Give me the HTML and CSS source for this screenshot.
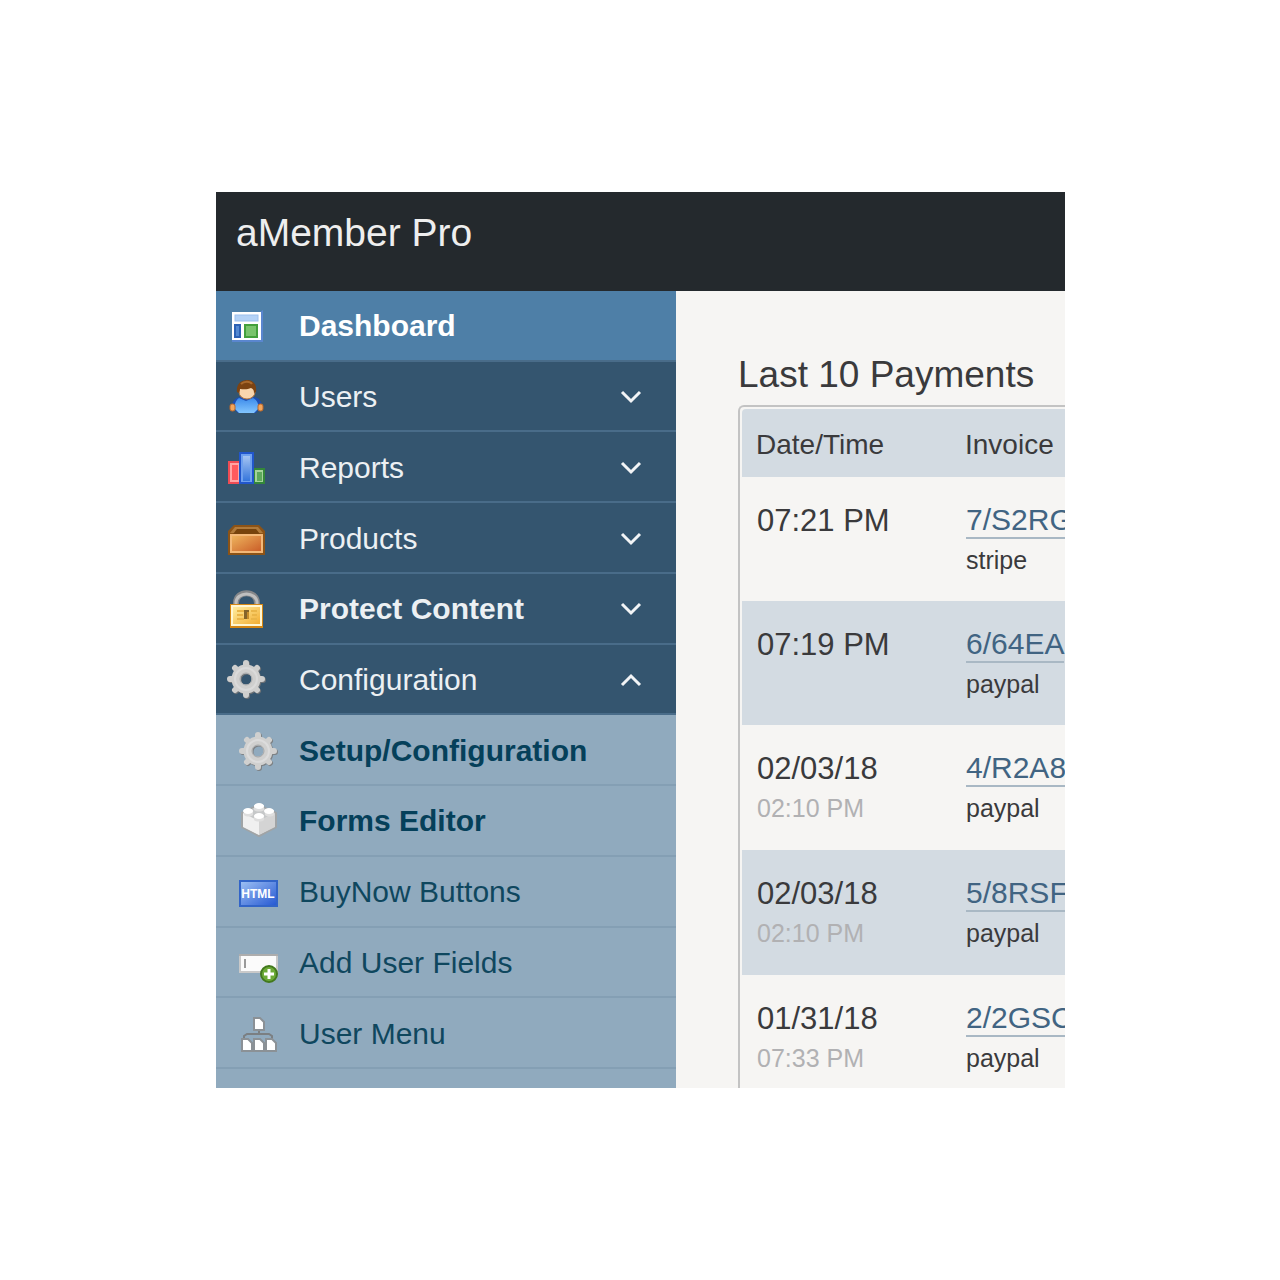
FILE: index.html
```html
<!DOCTYPE html>
<html lang="en">
<head>
  <meta charset="UTF-8" />
  <meta name="viewport" content="width=device-width, initial-scale=1.0"/>
  <title>aMember Pro</title>
  <link rel="stylesheet" href="styles.css">
</head>
<body>

  <div class="app">
    <header class="topbar">aMember Pro</header>

    <div class="content">
      <!-- Sidebar -->
      <nav class="sidebar">
        <ul class="menu">
          <li class="active">
            <a href="#">
              <svg class="icon" viewBox="0 0 40 40">
                <path d="M6 6h28l3-2v32H6z" fill="#5a86cf"/>
                <rect x="6" y="6" width="29" height="28" fill="#fff"/>
                <rect x="9" y="9" width="23" height="6" fill="#b4d2f6" stroke="#9cc0ee"/>
                <rect x="9" y="19" width="5" height="12" fill="#5289d2" stroke="#2c62b4" stroke-width="2"/>
                <rect x="19" y="19" width="12" height="12" fill="#79c46c" stroke="#43a03c" stroke-width="2"/>
              </svg>
              <span>Dashboard</span>
            </a>
          </li>
          <li>
            <a href="#">
              <svg class="icon" viewBox="0 0 40 40">
                <defs>
                  <linearGradient id="shirt" x1="0" y1="0" x2="0" y2="1">
                    <stop offset="0" stop-color="#3d8bea"/>
                    <stop offset="1" stop-color="#82c6ff"/>
                  </linearGradient>
                </defs>
                <path d="M6 29c0-5 4-9 9-9h12c5 0 9 4 9 9l-4 4-2 3H12l-3-3z" fill="#1c4fb4"/>
                <path d="M13 21l7 3 7-3c4 2 6 6 5 11l-4 4H13l-4-4c-1-5 1-9 4-11z" fill="url(#shirt)"/>
                <rect x="4" y="27" width="5" height="7" rx="2" fill="#f2a65c" stroke="#b8662a"/>
                <rect x="32" y="27" width="5" height="7" rx="2" fill="#f2a65c" stroke="#b8662a"/>
                <ellipse cx="21" cy="15" rx="8" ry="7" fill="#f8d6ae" stroke="#b57840"/>
                <path d="M11 15C10 7 15 3 21 3s10 4 9 12l-2 1c0-3-1-4-3-5-4 2-9 1-11 1l-1 4z" fill="#7c4312"/>
                <path d="M15 7c3-3 9-3 11 0" stroke="#a8692c" stroke-width="2" fill="none"/>
              </svg>
              <span>Users</span>
              <svg class="chevron" viewBox="0 0 22 14"><path d="M2 2l9 9 9-9"/></svg>
            </a>
          </li>
          <li>
            <a href="#">
              <svg class="icon" viewBox="0 0 40 40">
                <defs>
                  <linearGradient id="bar" x1="0" y1="0" x2="0" y2="1">
                    <stop offset="0" stop-color="#a5c4f2"/>
                    <stop offset="1" stop-color="#3576dc"/>
                  </linearGradient>
                </defs>
                <rect x="3" y="14" width="11" height="21" fill="#ffa4a4" stroke="#ee4c54" stroke-width="2"/>
                <rect x="6" y="17" width="6" height="15" fill="#ff5a5e"/>
                <rect x="28" y="21" width="10" height="14" fill="#a5d49b" stroke="#33873a" stroke-width="2"/>
                <rect x="31" y="24" width="5" height="9" fill="#5fa95c"/>
                <rect x="14" y="5" width="13" height="30" fill="#6ea0ee" stroke="#2156cc" stroke-width="2"/>
                <rect x="17" y="8" width="7" height="25" fill="url(#bar)"/>
              </svg>
              <span>Reports</span>
              <svg class="chevron" viewBox="0 0 22 14"><path d="M2 2l9 9 9-9"/></svg>
            </a>
          </li>
          <li>
            <a href="#">
              <svg class="icon" viewBox="0 0 40 40">
                <defs>
                  <linearGradient id="box" x1="0" y1="0" x2="1" y2="1">
                    <stop offset="0" stop-color="#efb75f"/>
                    <stop offset="1" stop-color="#c95a26"/>
                  </linearGradient>
                </defs>
                <path d="M8 6h25l6 6v24H2V12z" fill="#8c5316"/>
                <path d="M9 8h23l5 6H4z" fill="#b07a3a"/>
                <path d="M11 10h19l4 5H7z" fill="#77430c"/>
                <rect x="5" y="16" width="31" height="17" fill="url(#box)" stroke="#f3b878" stroke-width="2"/>
              </svg>
              <span>Products</span>
              <svg class="chevron" viewBox="0 0 22 14"><path d="M2 2l9 9 9-9"/></svg>
            </a>
          </li>
          <li class="bold">
            <a href="#">
              <svg class="icon" viewBox="0 0 40 40">
                <defs>
                  <linearGradient id="lock" x1="0" y1="0" x2="1" y2="1">
                    <stop offset="0" stop-color="#fff0a6"/>
                    <stop offset="1" stop-color="#f2aa2c"/>
                  </linearGradient>
                </defs>
                <path d="M10 17v-3c0-13 21-13 21 0v3" fill="none" stroke="#85878a" stroke-width="6"/>
                <path d="M10 16v-2c0-12 21-12 21 0v2" fill="none" stroke="#bfbfbf" stroke-width="3"/>
                <rect x="4" y="15" width="33" height="24" fill="#d58713"/>
                <rect x="6" y="17" width="29" height="19" fill="url(#lock)" stroke="#fff6d2" stroke-width="2"/>
                <path d="M11 22h7M11 26h6M11 30h7M25 22h6M26 26h5M25 30h6" stroke="#eab548" stroke-width="2"/>
                <path d="M18 21h5v9h-5z" fill="#84642a"/>
                <path d="M21 23h2v7h-2z" fill="#c58d2c"/>
              </svg>
              <span>Protect Content</span>
              <svg class="chevron" viewBox="0 0 22 14"><path d="M2 2l9 9 9-9"/></svg>
            </a>
          </li>
          <li>
            <a href="#">
              <svg class="icon" viewBox="0 0 40 40">
                <defs>
                  <g id="gear" fill="none">
                    <circle cx="20" cy="19" r="10" stroke-width="9"/>
                    <path d="M20 6V3M20 32v3M7 19H4M33 19h3M11 10L9 8M29 10l2-2M11 28l-2 2M29 28l2 2" stroke-width="6" stroke-linecap="round"/>
                  </g>
                </defs>
                <use href="#gear" x="1" y="1" stroke="#6d7276"/>
                <use href="#gear" stroke="#cfcfce"/>
                <circle cx="20" cy="19" r="11" fill="none" stroke="#dadada" stroke-width="2"/>
                <circle cx="20" cy="19" r="6" fill="none" stroke="#a9abad"/>
              </svg>
              <span>Configuration</span>
              <svg class="chevron" viewBox="0 0 22 14"><path d="M2 12l9-9 9 9"/></svg>
            </a>
          </li>
        </ul>

        <ul class="menu submenu">
          <li class="bold">
            <a href="#">
              <svg class="icon" viewBox="0 0 40 40">
                <use href="#gear" x="1" y="2" stroke="#7d8184"/>
                <use href="#gear" y="1" stroke="#d0d0cf"/>
                <circle cx="20" cy="20" r="11" fill="none" stroke="#dcdcdc" stroke-width="2"/>
                <circle cx="20" cy="20" r="6" fill="none" stroke="#a5a7a9"/>
              </svg>
              <span>Setup/Configuration</span>
            </a>
          </li>
          <li class="bold">
            <a href="#">
              <svg class="icon" viewBox="0 0 40 40">
                <path d="M4 12l16-8 18 8v14l-17 9L4 26z" fill="#e8e8e8" stroke="#a0a4a6" stroke-width="2" stroke-linejoin="round"/>
                <path d="M21 20l16-8v14l-16 8z" fill="#d4d4d4"/>
                <path d="M5 12l16 8v14L5 26z" fill="#f0f0f0"/>
                <path d="M5 12l16-7 16 7-16 8z" fill="#c6c8c9"/>
                <g fill="#dedede">
                  <path d="M16 4v5c2 2 8 2 10 0V4z"/>
                  <path d="M6 9v5c2 2 7 2 9 0V9z"/>
                  <path d="M27 9v5c2 2 7 2 9 0V9z"/>
                  <path d="M16 14v5c2 2 8 2 10 0v-5z"/>
                </g>
                <g fill="#fff">
                  <ellipse cx="21" cy="5" rx="5" ry="3"/>
                  <ellipse cx="10" cy="10" rx="5" ry="3"/>
                  <ellipse cx="31" cy="10" rx="5" ry="3"/>
                  <ellipse cx="21" cy="15" rx="5" ry="3"/>
                </g>
              </svg>
              <span>Forms Editor</span>
            </a>
          </li>
          <li>
            <a href="#">
              <svg class="icon" viewBox="0 0 40 40">
                <defs>
                  <linearGradient id="html" x1="0" y1="0" x2="1" y2="1">
                    <stop offset="0" stop-color="#a0c2f4"/>
                    <stop offset="1" stop-color="#2457d2"/>
                  </linearGradient>
                </defs>
                <rect x="2" y="9" width="37" height="25" fill="url(#html)" stroke="#3264c8" stroke-width="2"/>
                <text class="icon-text" x="20" y="26" text-anchor="middle">HTML</text>
              </svg>
              <span>BuyNow Buttons</span>
            </a>
          </li>
          <li>
            <a href="#">
              <svg class="icon" viewBox="0 0 40 40">
                <rect x="2" y="12" width="37" height="17" fill="#fbfbfb" stroke="#c9c9c9" stroke-width="2"/>
                <path d="M1 12h39" stroke="#adadad" stroke-width="2"/>
                <path d="M7 16v9" stroke="#9a9a9a" stroke-width="2"/>
                <circle cx="31" cy="31" r="8" fill="#6cab37" stroke="#43791e" stroke-width="2"/>
                <path d="M31 26v10M26 31h10" stroke="#fff" stroke-width="3"/>
              </svg>
              <span>Add User Fields</span>
            </a>
          </li>
          <li>
            <a href="#">
              <svg class="icon" viewBox="0 0 40 40">
                <defs>
                  <path id="doc" d="M0 0h6l4 4v8H0z" fill="#fff" stroke="#8b9196" stroke-width="2"/>
                </defs>
                <path d="M21 16v4M6 24v-2l3-2h22l3 2v3" fill="none" stroke="#7b7f82" stroke-width="2"/>
                <use href="#doc" x="16" y="4"/>
                <use href="#doc" x="4" y="25"/>
                <use href="#doc" x="16" y="25"/>
                <use href="#doc" x="28" y="25"/>
              </svg>
              <span>User Menu</span>
            </a>
          </li>
        </ul>
      </nav>

      <!-- Payments -->
      <main class="main">
        <h1>Last 10 Payments</h1>
        <div class="grid-wrap">
          <table class="grid">
            <thead>
              <tr>
                <th class="col-date">Date/Time</th>
                <th>Invoice</th>
              </tr>
            </thead>
            <tbody>
              <tr>
                <td><div class="date">07:21 PM</div></td>
                <td><a href="#">7/S2RG</a><div class="paysys">stripe</div></td>
              </tr>
              <tr>
                <td><div class="date">07:19 PM</div></td>
                <td><a href="#">6/64EA</a><div class="paysys">paypal</div></td>
              </tr>
              <tr>
                <td><div class="date">02/03/18</div><div class="time">02:10 PM</div></td>
                <td><a href="#">4/R2A8</a><div class="paysys">paypal</div></td>
              </tr>
              <tr>
                <td><div class="date">02/03/18</div><div class="time">02:10 PM</div></td>
                <td><a href="#">5/8RSF</a><div class="paysys">paypal</div></td>
              </tr>
              <tr>
                <td><div class="date">01/31/18</div><div class="time">07:33 PM</div></td>
                <td><a href="#">2/2GSC</a><div class="paysys">paypal</div></td>
              </tr>
            </tbody>
          </table>
        </div>
      </main>
    </div>
  </div>

</body>
</html>
```
FILE: styles.css
```css
* {
  box-sizing: border-box;
  margin: 0;
  padding: 0;
}

body {
  background: #fff;
  font-family: "Liberation Sans", Arial, sans-serif;
  height: 100vh;
  padding: 192px 215px 192px 216px;
}

.app {
  display: flex;
  flex-direction: column;
  height: 100%;
  overflow: hidden;
}

.topbar {
  background: #24292d;
  color: #eee;
  font-size: 39px;
  line-height: 46px;
  padding: 18px 20px 35px;
}

.content {
  display: flex;
  flex: 1;
  min-height: 0;
}

/* Sidebar */
.sidebar {
  display: flex;
  flex-direction: column;
  flex: none;
  width: 460px;
  padding-bottom: 19px;
  background: #90aabe;
}

.menu {
  display: flex;
  flex-direction: column;
  flex: 6;
  list-style: none;
  background: #34556f;
}

.menu li {
  flex: 1;
  border-bottom: 2px solid #496c89;
}

.menu a {
  display: flex;
  align-items: center;
  gap: 33px;
  height: 100%;
  padding: 2px 34px 0 10px;
  color: #ecf0f3;
  font-size: 30px;
  text-decoration: none;
}

.menu .active {
  background: #4e7fa7;
}

.menu .active a {
  color: #fff;
  font-weight: bold;
}

.menu .bold a {
  font-weight: bold;
}

.submenu {
  flex: 5;
  background: #90aabe;
}

.submenu li {
  border-bottom-color: #849fb4;
}

.submenu a {
  gap: 21px;
  padding-left: 22px;
  color: #0f475e;
}

.submenu .bold a {
  color: #05405a;
}

.icon {
  flex: none;
  width: 40px;
  height: 40px;
}

.icon-text {
  fill: #fff;
  font-size: 12px;
  font-weight: bold;
}

.chevron {
  width: 22px;
  height: 14px;
  margin-left: auto;
  fill: none;
  stroke: #f2f4f6;
  stroke-width: 3;
}

/* Payments */
.main {
  flex: 1;
  min-width: 0;
  overflow: hidden;
  padding: 62px 0 0 62px;
  background: #f6f5f3;
  color: #3a3a3c;
}

h1 {
  margin-bottom: 8px;
  font-size: 37px;
  font-weight: normal;
  line-height: 44px;
  white-space: nowrap;
}

.grid-wrap {
  padding: 2px 0 2px 2px;
  border: 2px solid #c3c3c3;
  border-right: none;
  border-radius: 6px 0 0 6px;
}

.grid {
  width: 100%;
  border-collapse: collapse;
  table-layout: fixed;
  white-space: nowrap;
}

.grid th {
  height: 68px;
  padding: 3px 0 0 14px;
  background: #d3dbe2;
  font-size: 28px;
  font-weight: normal;
  text-align: left;
}

.grid th:first-child {
  border-top-left-radius: 4px;
}

.grid .col-date {
  width: 209px;
}

.grid td {
  padding: 26px 0 26px 15px;
  vertical-align: top;
}

.grid tbody tr:nth-child(even) {
  background: #d3dbe2;
}

.grid td a {
  display: block;
  width: max-content;
  border-bottom: 2px solid #a9b8c4;
  color: #416482;
  font-size: 30px;
  line-height: 34px;
  text-decoration: none;
}

.date {
  font-size: 31px;
  line-height: 36px;
}

.paysys,
.time {
  margin-top: 6px;
  font-size: 25px;
  line-height: 30px;
}

.time {
  color: #b1b1b3;
  line-height: 31px;
}
```
